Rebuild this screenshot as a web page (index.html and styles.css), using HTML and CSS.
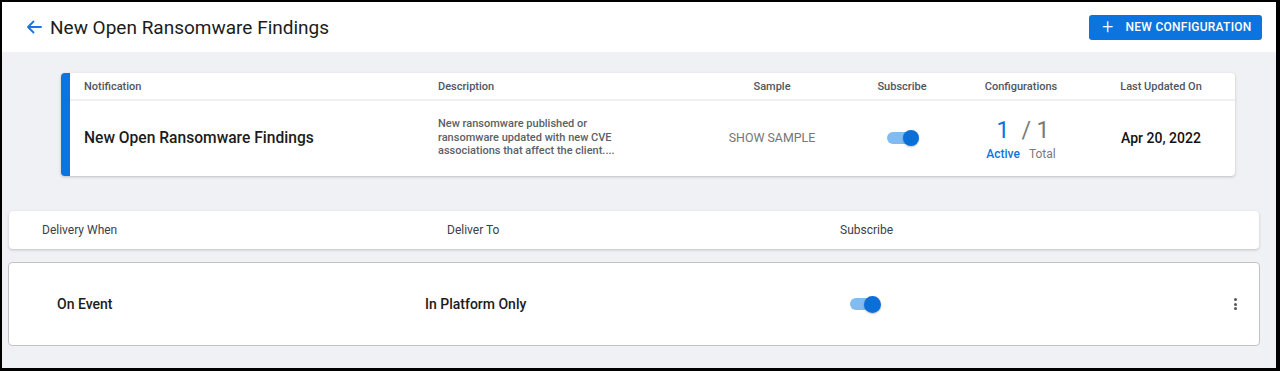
FILE: index.html
```html
<!DOCTYPE html>
<html>
<head>
<meta charset="utf-8">
<link rel="stylesheet" href="styles.css">
</head>
<body>
<div class="frame">
  <header class="topbar">
    <div class="title-wrap">
      <svg class="back" width="16" height="14" viewBox="0 0 16 14"><path d="M15 7H2M7.5 1.5L2 7l5.5 5.5" fill="none" stroke="#1a73e0" stroke-width="1.8" stroke-linecap="round" stroke-linejoin="round"/></svg>
      <h1 class="page-title">New Open Ransomware Findings</h1>
    </div>
    <button class="new-btn"><span class="plus">+</span><span>NEW CONFIGURATION</span></button>
  </header>
  <main class="content">
    <section class="notif-card">
      <div class="notif-grid notif-head">
        <div class="c-left">Notification</div>
        <div class="c-left">Description</div>
        <div class="c-center">Sample</div>
        <div class="c-center">Subscribe</div>
        <div class="c-center">Configurations</div>
        <div class="c-center c-last">Last Updated On</div>
      </div>
      <div class="notif-grid notif-body">
        <div class="c-left notif-name">New Open Ransomware Findings</div>
        <div class="c-left desc">New ransomware published or<br>ransomware updated with new CVE<br>associations that affect the client....</div>
        <div class="c-center sample">SHOW SAMPLE</div>
        <div class="c-center"><span class="toggle"><span class="knob"></span></span></div>
        <div class="c-center conf">
          <div class="conf-nums"><span class="blue">1</span><span class="gray slash">/ 1</span></div>
          <div class="conf-labels"><span class="blue">Active</span><span class="gray">Total</span></div>
        </div>
        <div class="c-center c-last date">Apr 20, 2022</div>
      </div>
    </section>
    <div class="delivery-head">
      <div>Delivery When</div>
      <div>Deliver To</div>
      <div>Subscribe</div>
    </div>
    <div class="delivery-row">
      <div class="dr-when">On Event</div>
      <div class="dr-to">In Platform Only</div>
      <div class="dr-sub"><span class="toggle toggle-lg"><span class="knob"></span></span></div>
      <div class="kebab"><span></span><span></span><span></span></div>
    </div>
  </main>
</div>
</body>
</html>
```
FILE: styles.css
```css
* { box-sizing: border-box; }
html, body { margin: 0; padding: 0; }
body { font-family: Roboto, "Noto Sans", sans-serif; color: #1f1f1f; }
.frame {
  width: 1280px; height: 371px;
  border-style: solid; border-color: #000;
  border-width: 2px 4px 3px 2px;
  background: #f0f1f5;
  display: flex; flex-direction: column;
  overflow: hidden;
}
.topbar {
  height: 50px; background: #fff;
  display: flex; align-items: center; justify-content: space-between;
  padding: 0 14px 0 24px;
  flex: none;
}
.title-wrap { display: flex; align-items: center; gap: 8px; }
.back { display: block; }
.page-title { margin: 0; font-size: 19px; font-weight: 400; color: #1c1c1c; }
.new-btn {
  height: 25px; width: 173px;
  background: #0b74de; color: #fff; border: none; border-radius: 3px;
  font-family: Roboto, sans-serif; font-size: 12px; font-weight: 500;
  display: flex; align-items: center; padding: 0 0 0 13px; gap: 12px;
  letter-spacing: 0.25px;
}
.plus { font-size: 20px; font-weight: 300; line-height: 1; margin-top: -2px; }
.content { padding-top: 21px; display: flex; flex-direction: column; flex: 1; }

.notif-card {
  margin: 0 41px 0 59px; height: 103px;
  background: #fff; border-radius: 4px;
  border-left: 9px solid #0b74de;
  box-shadow: 0 1px 3px rgba(0,0,0,0.22);
}
.notif-grid {
  display: grid;
  grid-template-columns: 354px 272px 124px 136px 102px 163px;
  padding-left: 14px;
  align-items: center;
}
.notif-head {
  height: 28px; border-bottom: 2px solid #eeeff2;
  font-size: 11px; font-weight: 500; color: #505660;
  padding-top: 1px;
}
.notif-body { height: 73px; }
.c-center { text-align: center; display: flex; justify-content: center; align-items: center; }
.c-last { padding-left: 15px; }
.notif-name { font-size: 15.6px; font-weight: 500; color: #1c1c1c; }
.desc { font-size: 11px; font-weight: 500; color: #5c5f66; line-height: 13.5px; }
.sample { font-size: 12.4px; color: #757575; }
.conf { flex-direction: column; padding-top: 6px; }
.conf-nums { font-size: 23px; line-height: 24px; padding-left: 4px; }
.conf-nums .slash { margin-left: 12px; }
.conf-labels { font-size: 12px; font-weight: 500; display: flex; gap: 9px; line-height: 16px; margin-top: 3px; }
.conf-labels .gray { font-weight: 400; }
.blue { color: #0b74de; }
.gray { color: #7a7a7a; }
.date { font-size: 14px; font-weight: 500; color: #111; }

.toggle {
  position: relative; display: inline-block;
  width: 30px; height: 12px; border-radius: 6px;
  background: #82bbf0;
}
.knob {
  position: absolute; right: -2px; top: 50%;
  width: 16px; height: 16px; margin-top: -8px;
  border-radius: 50%; background: #0b6fd8;
  box-shadow: 0 1px 2px rgba(0,0,0,0.25);
}
.toggle-lg { width: 30px; height: 12px; }
.toggle-lg .knob { width: 17px; height: 17px; margin-top: -8.5px; right: -1px; }

.delivery-head {
  margin: 35px 17px 0 7px; height: 38px; flex: none;
  background: #fff; border-radius: 4px;
  box-shadow: 0 1px 3px rgba(0,0,0,0.2);
  display: grid; grid-template-columns: 405px 393px 1fr;
  align-items: center; padding-left: 33px;
  font-size: 12px; color: #3c4048;
}
.delivery-row {
  margin: 13px 16px 0 6px; height: 84px; flex: none;
  background: #fff; border: 1px solid #c2c2c2; border-radius: 4px;
  display: grid; grid-template-columns: 368px 425px 1fr 24px;
  align-items: center; padding-left: 48px; padding-right: 12px;
  font-size: 14px; font-weight: 500; color: #1c1c1c;
}
.dr-sub { display: flex; }
.kebab { display: flex; flex-direction: column; align-items: center; gap: 1.5px; }
.kebab span { width: 3px; height: 3px; border-radius: 50%; background: #555; }
```
